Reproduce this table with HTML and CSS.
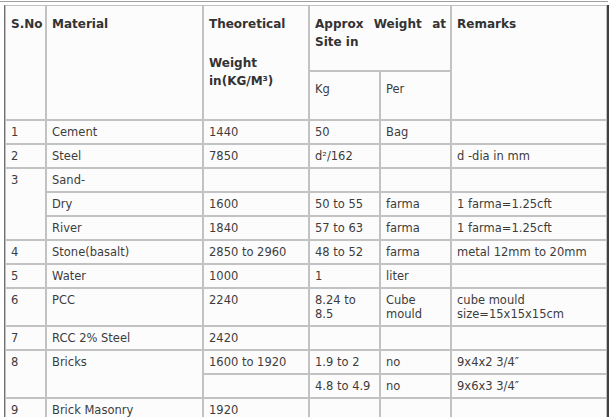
FILE: index.html
```html
<!DOCTYPE html>
<html>
<head>
<meta charset="utf-8">
<link rel="stylesheet" href="styles.css">
</head>
<body>
<div class="rule"></div>
<table class="grid">
  <colgroup>
    <col class="c-no"><col class="c-mat"><col class="c-th"><col class="c-kg"><col class="c-per"><col class="c-rem">
  </colgroup>
  <tr class="h1">
    <th rowspan="2">S.No</th>
    <th rowspan="2">Material</th>
    <th rowspan="2"><div>Theoretical</div><div class="gap">Weight<br>in(KG/M³)</div></th>
    <th colspan="2" class="just">Approx Weight at Site in</th>
    <th rowspan="2">Remarks</th>
  </tr>
  <tr class="h2">
    <td class="sub">Kg</td>
    <td class="sub">Per</td>
  </tr>
  <tr><td>1</td><td>Cement</td><td>1440</td><td>50</td><td>Bag</td><td></td></tr>
  <tr><td>2</td><td>Steel</td><td>7850</td><td>d²/162</td><td></td><td>d -dia in mm</td></tr>
  <tr><td rowspan="3">3</td><td>Sand-</td><td></td><td></td><td></td><td></td></tr>
  <tr><td>Dry</td><td>1600</td><td>50 to 55</td><td>farma</td><td>1 farma=1.25cft</td></tr>
  <tr><td>River</td><td>1840</td><td>57 to 63</td><td>farma</td><td>1 farma=1.25cft</td></tr>
  <tr><td>4</td><td>Stone(basalt)</td><td>2850 to 2960</td><td>48 to 52</td><td>farma</td><td>metal 12mm to 20mm</td></tr>
  <tr><td>5</td><td>Water</td><td>1000</td><td>1</td><td>liter</td><td></td></tr>
  <tr><td>6</td><td>PCC</td><td>2240</td><td>8.24 to<br>8.5</td><td>Cube<br>mould</td><td>cube mould<br>size=15x15x15cm</td></tr>
  <tr><td>7</td><td>RCC 2% Steel</td><td>2420</td><td></td><td></td><td></td></tr>
  <tr><td rowspan="2">8</td><td rowspan="2">Bricks</td><td>1600 to 1920</td><td>1.9 to 2</td><td>no</td><td>9x4x2 3/4″</td></tr>
  <tr><td></td><td>4.8 to 4.9</td><td>no</td><td>9x6x3 3/4″</td></tr>
  <tr><td>9</td><td>Brick Masonry</td><td>1920</td><td></td><td></td><td></td></tr>
</table>
</body>
</html>
```
FILE: styles.css
```css
html, body {
  margin: 0;
  padding: 0;
  background: #ffffff;
}
body {
  font-family: "DejaVu Sans", Verdana, sans-serif;
  font-size: 11.5px;
  color: #3c3c3c;
}
.rule {
  margin-top: 1px;
  width: 608px;
  height: 1px;
  background: #a0a0a0;
}
.grid {
  box-sizing: border-box;
  margin: 3px 0 0 4px;
  width: 605px;
  table-layout: fixed;
  border-collapse: separate;
  border-spacing: 0;
  border-left: 1px solid #707070;
  border-right: 2px solid #404040;
  background: #fcfcfc;
}
.c-no { width: 41px; }
.c-mat { width: 157px; }
.c-th { width: 106px; }
.c-kg { width: 71px; }
.c-per { width: 71px; }
.c-rem { width: 156px; }
.grid td, .grid th {
  border: 1px solid #c2c2c2;
  padding: 4px 4px 4px 5px;
  line-height: 14px;
  vertical-align: top;
  text-align: left;
}
.grid th {
  font-size: 12px;
  font-weight: bold;
  color: #333333;
  line-height: 18px;
  padding-top: 9px;
}
.grid .gap {
  margin-top: 21px;
}
.grid th.just {
  text-align: justify;
}
.h1 { height: 66px; }
.h2 { height: 49px; }
.grid td.sub {
  line-height: 18px;
  padding-top: 8px;
}
```
